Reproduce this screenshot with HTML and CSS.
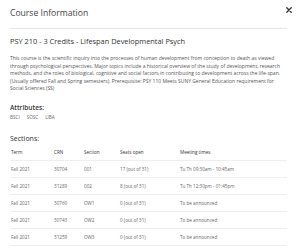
FILE: index.html
```html
<!DOCTYPE html>
<html>
<head>
<meta charset="utf-8">
<link rel="stylesheet" href="styles.css">
</head>
<body>
<div class="modal">
  <div class="modal-header">
    <div class="modal-title">Course Information</div>
    <svg class="close" width="6" height="6" viewBox="0 0 6 6"><path d="M0.8 0.8 L5.2 5.2 M5.2 0.8 L0.8 5.2" stroke="#333" stroke-width="1.3" stroke-linecap="round"/></svg>
  </div>
  <div class="modal-body">
    <div class="course-name">PSY 210 - 3 Credits - Lifespan Developmental Psych</div>
    <p class="desc">This course is the scientific inquiry into the processes of human development from conception to death as viewed through psychological perspectives. Major topics include a historical overview of the study of development, research methods, and the roles of biological, cognitive and social factors in contributing to development across the life-span. (Usually offered Fall and Spring semesters). Prerequisite: PSY 110 Meets SUNY General Education requirement for Social Sciences (SS)</p>
    <div class="label">Attributes:</div>
    <div class="attrs"><span>BSCI</span><span>SOSC</span><span>LIBA</span></div>
    <div class="sections-label">Sections:</div>
    <table class="sections">
      <thead>
        <tr><th class="c-term">Term</th><th class="c-crn">CRN</th><th class="c-sec">Section</th><th class="c-seats">Seats open</th><th>Meeting times</th></tr>
      </thead>
      <tbody>
        <tr><td>Fall 2021</td><td>30704</td><td>001</td><td>17 (out of 31)</td><td>Tu Th 09:30am - 10:45am</td></tr>
        <tr><td>Fall 2021</td><td>31289</td><td>002</td><td>8 (out of 31)</td><td>Tu Th 12:30pm - 01:45pm</td></tr>
        <tr><td>Fall 2021</td><td>30760</td><td>OW1</td><td>0 (out of 31)</td><td>To be announced</td></tr>
        <tr><td>Fall 2021</td><td>30743</td><td>OW2</td><td>0 (out of 31)</td><td>To be announced</td></tr>
        <tr><td>Fall 2021</td><td>31259</td><td>OW3</td><td>0 (out of 31)</td><td>To be announced</td></tr>
      </tbody>
    </table>
  </div>
</div>
</body>
</html>
```
FILE: styles.css
```css
html, body {
  margin: 0;
  padding: 0;
  background: #fff;
}
body {
  font-family: "Open Sans", "Liberation Sans", sans-serif;
  color: #555;
  width: 300px;
  height: 250px;
  overflow: hidden;
}
.modal {
  padding: 0 13px 0 10px;
}
.modal-header {
  display: flex;
  justify-content: space-between;
  align-items: flex-start;
  height: 29px;
  border-bottom: 1px solid #e6e6e6;
  box-sizing: border-box;
}
.modal-title {
  font-size: 8.6px;
  line-height: 12px;
  margin-top: 7px;
  color: #444;
}
.close {
  margin-top: 7px;
  margin-right: -5px;
}
.course-name {
  font-size: 7.4px;
  line-height: 10px;
  margin-top: 7px;
  color: #333;
}
.desc {
  font-size: 5px;
  line-height: 7.5px;
  margin: 9px 0 0 0;
  padding-right: 2px;
  color: #555;
}
.label {
  font-size: 6.6px;
  font-weight: 600;
  line-height: 9px;
  margin-top: 10.5px;
  color: #333;
}
.attrs {
  display: flex;
  gap: 7px;
  font-size: 4.6px;
  line-height: 6px;
  margin-top: 2px;
  color: #666;
}
.sections-label {
  font-size: 7px;
  line-height: 10px;
  margin-top: 14px;
  color: #333;
}
.sections {
  width: 100%;
  border-collapse: collapse;
  margin-top: 0;
  font-size: 4.6px;
}
.sections th {
  text-align: left;
  font-weight: 400;
  color: #333;
  height: 16px;
  padding: 0 0 0 1px;
  border-bottom: 1px solid #eee;
}
.sections td {
  height: 16px;
  padding: 0 0 0 1px;
  border-bottom: 1px solid #eee;
  color: #666;
}
.c-term { width: 42px; }
.c-crn { width: 29px; }
.c-sec { width: 35px; }
.c-seats { width: 59px; }
```
